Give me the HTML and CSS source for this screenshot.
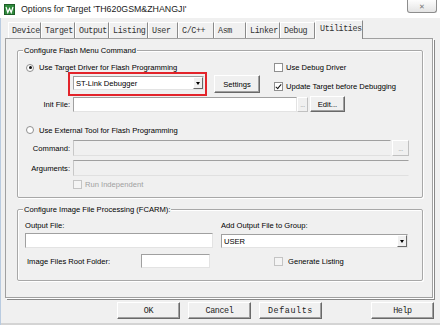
FILE: index.html
```html
<!DOCTYPE html>
<html lang="en">
<head>
    <meta charset="UTF-8">
    <title>Options for Target</title>
    <link rel="stylesheet" href="styles.css">
</head>
<body>

<div class="window">

    <!-- Barre de titre -->
    <div class="titlebar">
        <svg class="app-icon" viewBox="0 0 11 11">
            <rect x="0" y="0" width="11" height="11" fill="#2f8a3c"/>
            <rect x="0.5" y="0.5" width="10" height="10" fill="none" stroke="#1d5e27"/>
            <path d="M2 3 L3.8 8.5 L5.5 4.5 L7.2 8.5 L9 3" fill="none" stroke="#fff" stroke-width="1.2"/>
        </svg>
        <span class="title">Options for Target 'TH620GSM&amp;ZHANGJI'</span>
        <div class="close">✕</div>
    </div>

    <!-- Onglets -->
    <div class="tabs">
        <span class="tab">Device</span>
        <span class="tab">Target</span>
        <span class="tab">Output</span>
        <span class="tab">Listing</span>
        <span class="tab">User</span>
        <span class="tab">C/C++</span>
        <span class="tab">Asm</span>
        <span class="tab">Linker</span>
        <span class="tab">Debug</span>
        <span class="tab active">Utilities</span>
    </div>

    <div class="panel">

        <!-- Configure Flash Menu Command -->
        <div class="group flash">
            <span class="legend">Configure Flash Menu Command</span>

            <div class="split row-a">
                <div class="cell indent">
                    <span class="radio on"></span>Use Target Driver for Flash Programming
                </div>
                <div class="cell">
                    <span class="check"></span>Use Debug Driver
                </div>
            </div>

            <div class="split row-b">
                <div class="cell">
                    <div class="redbox">
                        <div class="combo driver">ST-Link Debugger<span class="arrow"></span></div>
                    </div>
                    <button class="btn small settings">Settings</button>
                </div>
                <div class="cell pushed">
                    <span class="check on"></span>Update Target before Debugging
                </div>
            </div>

            <div class="row row-c">
                <span class="lbl-r">Init File:</span>
                <span class="field init"></span>
                <button class="btn dots" disabled>...</button>
                <button class="btn small edit">Edit...</button>
            </div>

            <div class="row row-d indent">
                <span class="radio"></span>Use External Tool for Flash Programming
            </div>

            <div class="row row-e">
                <span class="lbl-r">Command:</span>
                <span class="field off command"></span>
                <button class="btn dots wide" disabled>...</button>
            </div>

            <div class="row row-f">
                <span class="lbl-r">Arguments:</span>
                <span class="field off arguments"></span>
            </div>

            <div class="row row-g">
                <span class="check off"></span><span class="muted">Run Independent</span>
            </div>
        </div>

        <!-- Configure Image File Processing -->
        <div class="group image">
            <span class="legend">Configure Image File Processing (FCARM):</span>

            <div class="grid2 row-1">
                <span>Output File:</span>
                <span>Add Output File to Group:</span>
            </div>

            <div class="grid2 row-2">
                <span class="field output"></span>
                <div class="combo group-combo">USER<span class="arrow"></span></div>
            </div>

            <div class="grid2 row-3">
                <div class="cell">
                    <span class="root-lbl">Image Files Root Folder:</span>
                    <span class="field root"></span>
                </div>
                <div class="cell listing">
                    <span class="check off"></span>Generate Listing
                </div>
            </div>
        </div>

    </div>

    <!-- Boutons du bas -->
    <div class="buttons">
        <button class="btn">OK</button>
        <button class="btn">Cancel</button>
        <button class="btn spaced">Defaults</button>
        <button class="btn help">Help</button>
    </div>

</div>

</body>
</html>
```

FILE: styles.css
```css
* { box-sizing: border-box; }

body {
    margin: 0;
    background: #fff;
    font-family: "Liberation Sans", Arial, sans-serif;
    font-size: 7.6px;
    line-height: 11px;
    color: #000;
}

.window {
    width: 440px;
    height: 325px;
    background: #f0f0f0;
    overflow: hidden;
    box-shadow: inset 1px 0 0 #b9cbe0, inset 0 -2px 0 #d4d4d4;
}

/* Barre de titre */
.titlebar {
    height: 18px;
    background: #fff;
    display: flex;
    align-items: flex-start;
}

.app-icon { width: 11px; height: 11px; margin: 4px 0 0 4px; }

.title {
    margin: 4px 0 0 6px;
    font-size: 8.8px;
    line-height: 11px;
    color: #1a1a1a;
}

.close {
    margin-left: auto;
    margin-right: 3px;
    width: 30px;
    height: 13px;
    border: 1px solid #8d8d8d;
    border-top: none;
    border-radius: 0 0 3px 3px;
    background: linear-gradient(#fdfdfd, #e4e4e4);
    font-size: 7px;
    color: #777;
    display: flex;
    align-items: center;
    justify-content: center;
}

/* Onglets */
.tabs {
    height: 20px;
    padding-left: 8px;
    display: flex;
    align-items: flex-end;
}

.tab {
    height: 16px;
    padding: 3px 0 0 3px;
    border-top: 1px solid #fff;
    border-left: 1px solid #fff;
    border-right: 1px solid #8a8a8a;
    font-family: "Liberation Mono", monospace;
    font-size: 8.4px;
    letter-spacing: -0.4px;
    line-height: 11px;
    color: #333;
}

.tab:nth-child(1) { width: 33px; }
.tab:nth-child(2) { width: 34px; }
.tab:nth-child(3) { width: 34px; }
.tab:nth-child(4) { width: 39px; }
.tab:nth-child(5) { width: 30px; }
.tab:nth-child(6) { width: 36px; }
.tab:nth-child(7) { width: 32px; }
.tab:nth-child(8) { width: 34px; }
.tab:nth-child(9) { width: 35px; }

.tab.active {
    width: 48px;
    height: 19px;
    margin-bottom: -1px;
    padding: 3px 0 0 4px;
    position: relative;
    background: #f0f0f0;
}

.panel {
    margin-left: 5px;
    width: 428px;
    height: 260px;
    border: 1px solid #a0a0a0;
    box-shadow: 1px 1px 0 #fff, 2px 2px 0 #888;
    padding: 11px 0 0 11px;
}

/* Cadres */
.group {
    position: relative;
    width: 406px;
    border: 1px solid #a8a8a8;
    border-radius: 2px;
    box-shadow: inset 1px 1px 0 #fff, 1px 1px 0 #fff;
}

.legend {
    position: absolute;
    top: -6px;
    left: 5px;
    padding: 0 1px;
    background: #f0f0f0;
}

.flash { padding: 11px 0 7px 0; }
.image { margin-top: 11px; padding: 10px 0 12px 7px; }

.split { display: grid; grid-template-columns: 256px 1fr; }
.grid2 { display: grid; grid-template-columns: 196px 1fr; }
.cell { display: flex; align-items: center; }
.row { display: flex; align-items: center; }
.indent { padding-left: 8px; }

.row-a { height: 10px; }
.row-b { height: 24px; }
.row-c { height: 16px; }
.row-d { height: 12px; margin-top: 12px; }
.row-e { height: 16px; margin-top: 4px; }
.row-f { height: 16px; margin-top: 4px; }
.row-g { height: 11px; margin-top: 3px; padding-left: 55px; }
.pushed { padding-top: 4px; }

.row-1 { height: 11px; }
.row-2 { height: 15px; margin-top: 2px; align-items: start; }
.row-3 { height: 14px; margin-top: 6px; }

.lbl-r { width: 55px; padding-right: 3px; text-align: right; }
.muted { color: #a0a0a0; }

/* Contrôles */
.radio {
    width: 8px;
    height: 8px;
    margin-right: 5px;
    border-radius: 50%;
    border: 1px solid #8f8f8f;
    background: #fff;
    display: flex;
    align-items: center;
    justify-content: center;
}

.radio.on::after {
    content: "";
    width: 3px;
    height: 3px;
    border-radius: 50%;
    background: #111;
}

.check {
    position: relative;
    width: 9px;
    height: 9px;
    margin-right: 3px;
    border: 1px solid #8f8f8f;
    background: #fff;
}

.check.on::after {
    content: "";
    position: absolute;
    left: 2px;
    top: 0;
    width: 2px;
    height: 5px;
    border: solid #111;
    border-width: 0 1.5px 1.5px 0;
    transform: rotate(40deg);
}

.check.off { border-color: #c4c4c4; background: #f4f4f4; }

.field {
    height: 15px;
    background: #fff;
    border: 1px solid;
    border-color: #a0a0a0 #e3e3e3 #e3e3e3 #a0a0a0;
}

.field.off { height: 16px; background: #f0f0f0; border-color: #a0a0a0 #f0f0f0 #e0e0e0 #c8c8c8; }

.init { width: 224px; }
.command { width: 318px; }
.arguments { width: 336px; }
.output { width: 188px; }
.root { width: 69px; height: 14px; }
.root-lbl { width: 114px; margin-left: 2px; }
.listing { padding-left: 53px; }
.listing .check { margin-right: 5px; }

.combo {
    height: 14px;
    padding-left: 2px;
    display: flex;
    align-items: center;
    background: #fff;
    border: 1px solid;
    border-color: #a0a0a0 #e3e3e3 #e3e3e3 #a0a0a0;
}

.driver { width: 131px; }
.group-combo { width: 187px; margin-top: 1px; }

.arrow {
    margin-left: auto;
    width: 10px;
    height: 12px;
    border: 1px solid;
    border-color: #fff #696969 #696969 #fff;
    background: #f0f0f0;
    display: flex;
    align-items: center;
    justify-content: center;
}

.arrow::after {
    content: "";
    border-left: 2.5px solid transparent;
    border-right: 2.5px solid transparent;
    border-top: 3px solid #000;
}

.redbox {
    margin-left: 50px;
    width: 139px;
    height: 24px;
    padding: 2px 0 0 3px;
    border: 2px solid #e3242b;
}

.btn {
    width: 63px;
    height: 17px;
    padding: 0;
    background: #f0f0f0;
    border: 1px solid;
    border-color: #fff #696969 #696969 #fff;
    box-shadow: inset -1px -1px 0 #a0a0a0;
    font-family: "Liberation Mono", monospace;
    font-size: 8.4px;
    letter-spacing: -0.4px;
    color: #222;
}

.btn.small {
    font-family: "Liberation Sans", Arial, sans-serif;
    font-size: 7.6px;
    letter-spacing: 0;
    color: #000;
}

.settings { width: 46px; height: 18px; margin-left: 7px; }
.edit { width: 35px; height: 16px; margin-left: 2px; }

.dots {
    width: 11px;
    height: 15px;
    font-family: "Liberation Sans", Arial, sans-serif;
    font-size: 7px;
    color: #a0a0a0;
    border-color: #fff #c0c0c0 #c0c0c0 #fff;
    box-shadow: none;
}

.dots.wide { width: 17px; height: 16px; margin-left: 1px; }

/* Boutons du bas */
.buttons {
    margin-top: 4px;
    padding: 0 6px 0 117px;
    display: flex;
    gap: 8px;
}

.spaced { letter-spacing: 0.6px; }
.help { margin-left: auto; }
```
